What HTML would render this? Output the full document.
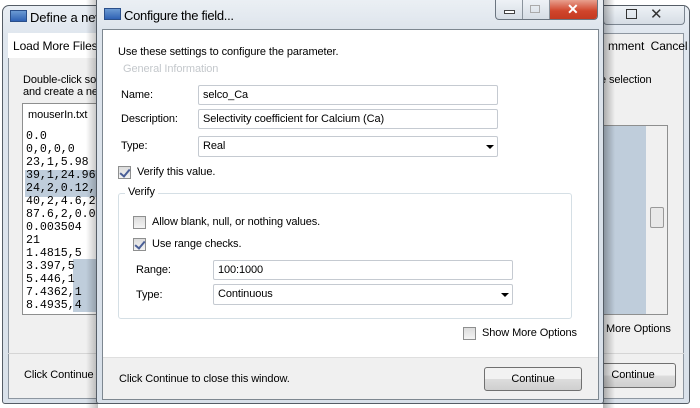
<!DOCTYPE html>
<html><head><style>
*{margin:0;padding:0;box-sizing:border-box}
body{width:700px;height:408px;background:#fff;position:relative;overflow:hidden;font-family:"Liberation Sans",sans-serif;font-size:11px;letter-spacing:-0.1px;color:#000}
.a{position:absolute}
.glass{background:linear-gradient(#e9eef4,#dfe6ee 30px,#d9e1ea);border:1px solid #555d66;border-radius:7px 7px 3px 3px}
.inp{position:absolute;background:#fff;border:1px solid #c5cad1;border-radius:2px;padding:3px 0 0 4px;height:20px}
.cb{position:absolute;width:13px;height:13px;border:1px solid #8e8f8f;background:linear-gradient(#dcdcdc,#f4f4f4)}
.chk::after{content:"";position:absolute;left:3px;top:0px;width:4px;height:8px;border:solid #4a5f97;border-width:0 2px 2px 0;transform:rotate(40deg)}
.btn{position:absolute;border:1px solid #707070;border-radius:3px;background:linear-gradient(#f2f2f2 50%,#dddddd 50%,#cfcfcf);text-align:center;padding-top:5px}
.arrow{position:absolute;width:0;height:0;border-left:4px solid transparent;border-right:4px solid transparent;border-top:4px solid #000}
.mono{font-family:"Liberation Mono",monospace;font-size:11.6px;line-height:13px;letter-spacing:0}
</style></head><body>
<!-- back window -->
<div class="a glass" style="left:2px;top:5px;width:688px;height:399px"></div>
<div class="a" style="left:10px;top:10px;width:17px;height:12px;background:linear-gradient(#6b9ad3,#2f62b4);border:1px solid #2a4f8a"></div>
<div class="a" style="left:30px;top:10px;font-size:13px">Define a new</div>
<div class="a" style="left:603px;top:6px;width:82px;height:19px;border:1px solid #7b8590;border-top:none;border-radius:0 0 4px 4px;background:linear-gradient(#eef2f6,#d6dde5)"></div>
<div class="a" style="left:626px;top:9px;width:11px;height:10px;border:1px solid #333"></div>
<div class="a" style="left:650px;top:5px;font-size:15px;color:#333">✕</div>
<div class="a" style="left:8px;top:33px;width:676px;height:366px;background:#f0f0f0;border:1px solid #8d96a0"></div>
<div class="a" style="left:8px;top:33px;width:335px;height:25px;background:#fff"></div>
<div class="a" style="left:13px;top:39px;font-size:12px">Load More Files</div>
<div class="a" style="left:608px;top:39px;font-size:12px">mment&nbsp;&nbsp;Cancel</div>
<div class="a" style="left:23px;top:74px">Double-click so<br>and create a ne</div>
<div class="a" style="left:600px;top:74px">e selection</div>
<div class="a" style="left:22px;top:103px;width:300px;height:212px;border:1px solid #8e8f8f;background:#fff"></div>
<div class="a" style="left:28px;top:109px">mouserIn.txt</div>
<div class="a" style="left:25px;top:170px;width:75px;height:27px;background:#bfcddb"></div>
<div class="a" style="left:73px;top:259px;width:27px;height:53px;background:#bfcddb"></div>
<div class="a mono" style="left:26px;top:130px">0.0<br>0,0,0,0<br>23,1,5.98<br>39,1,24.96<br>24,2,0.12,<br>40,2,4.6,2<br>87.6,2,0.0<br>0.003504<br>21<br>1.4815,5<br>3.397,5<br>5.446,1<br>7.4362,1<br>8.4935,4</div>
<div class="a" style="left:588px;top:125px;width:80px;height:190px;border:1px solid #8e8f8f;background:#bfcddb"></div>
<div class="a" style="left:646px;top:126px;width:21px;height:188px;background:#f0f0f0"></div>
<div class="a" style="left:650px;top:207px;width:14px;height:21px;border:1px solid #999;border-radius:2px;background:#e8e8e8"></div>
<div class="a" style="left:606px;top:323px">More Options</div>
<div class="a" style="left:8px;top:353px;width:676px;height:1px;background:#d5d5d5"></div>
<div class="a" style="left:24px;top:369px">Click Continue</div>
<div class="btn" style="left:590px;top:363px;width:86px;height:25px">Continue</div>
<!-- shadow -->
<div class="a" style="left:86px;top:0;width:12px;height:408px;background:linear-gradient(90deg,rgba(0,0,0,0),rgba(0,0,0,.25))"></div>
<div class="a" style="left:603px;top:0;width:12px;height:408px;background:linear-gradient(90deg,rgba(0,0,0,.3),rgba(0,0,0,0))"></div>
<!-- front window -->
<div class="a glass" style="left:96px;top:-6px;width:508px;height:410px;background:linear-gradient(#edf1f5,#dde4ec 36px,#d8e0e9)"></div>
<div class="a" style="left:104px;top:8px;width:17px;height:12px;background:linear-gradient(#6b9ad3,#2f62b4);border:1px solid #2a4f8a"></div>
<div class="a" style="left:124px;top:8px;font-size:13px;letter-spacing:-0.3px">Configure the field...</div>
<div class="a" style="left:495px;top:0;width:103px;height:20px;border:1px solid #6b7580;border-top:none;border-radius:0 0 4px 4px;background:linear-gradient(#eef2f6,#d6dde5);overflow:hidden">
<div class="a" style="left:26px;top:0;width:1px;height:20px;background:#8a939c"></div>
<div class="a" style="left:53px;top:0;width:1px;height:20px;background:#8a939c"></div>
<div class="a" style="left:54px;top:0;width:49px;height:20px;background:linear-gradient(#e8a08f,#d0452b 55%,#c2381f)"></div>
<div class="a" style="left:8px;top:10px;width:11px;height:4px;border:1px solid #444;background:#fff"></div>
<div class="a" style="left:34px;top:5px;width:10px;height:8px;border:1px solid #aaa"></div>
<div class="a" style="left:71px;top:1px;font-size:14px;font-weight:bold;color:#fff">✕</div>
</div>
<div class="a" style="left:102px;top:29px;width:497px;height:371px;background:#fff;border:1px solid #7d8790"></div>
<div class="a" style="left:103px;top:357px;width:495px;height:42px;background:#f0f0f0;border-top:1px solid #dfdfdf"></div>
<div class="a" style="left:118px;top:46px">Use these settings to configure the parameter.</div>
<div class="a" style="left:123px;top:63px;color:#c4c8cc">General Information</div>
<div class="a" style="left:121px;top:89px">Name:</div>
<div class="inp" style="left:198px;top:85px;width:300px">selco_Ca</div>
<div class="a" style="left:121px;top:113px">Description:</div>
<div class="inp" style="left:198px;top:109px;width:300px">Selectivity coefficient for Calcium (Ca)</div>
<div class="a" style="left:121px;top:140px">Type:</div>
<div class="inp" style="left:198px;top:136px;width:300px;height:21px">Real</div>
<div class="arrow" style="left:486px;top:145px"></div>
<div class="cb chk" style="left:118px;top:166px"></div>
<div class="a" style="left:137px;top:166px">Verify this value.</div>
<div class="a" style="left:118px;top:193px;width:454px;height:126px;border:1px solid #d5dfe5;border-radius:3px"></div>
<div class="a" style="left:125px;top:186px;background:#fff;padding:0 3px">Verify</div>
<div class="cb" style="left:133px;top:216px"></div>
<div class="a" style="left:152px;top:216px">Allow blank, null, or nothing values.</div>
<div class="cb chk" style="left:133px;top:238px"></div>
<div class="a" style="left:152px;top:238px">Use range checks.</div>
<div class="a" style="left:136px;top:264px">Range:</div>
<div class="inp" style="left:213px;top:260px;width:300px">100:1000</div>
<div class="a" style="left:136px;top:289px">Type:</div>
<div class="inp" style="left:213px;top:284px;width:300px;height:21px">Continuous</div>
<div class="arrow" style="left:501px;top:293px"></div>
<div class="cb" style="left:463px;top:327px"></div>
<div class="a" style="left:482px;top:327px">Show More Options</div>
<div class="a" style="left:119px;top:373px">Click Continue to close this window.</div>
<div class="btn" style="left:484px;top:367px;width:98px;height:24px">Continue</div>
</body></html>
